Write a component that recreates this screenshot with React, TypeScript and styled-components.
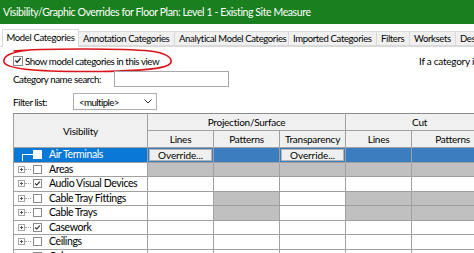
import React from "react";
import styled, { createGlobalStyle } from "styled-components";

const GlobalStyle = createGlobalStyle`
  html, body {
    margin: 0;
    padding: 0;
    background: #fff;
    overflow: hidden;
  }
  body {
    font-family: "Lato", "Liberation Sans", sans-serif;
    color: #000;
  }
`;

type Tone = "white" | "grey" | "blue";

type CategoryRow = {
  name: string;
  checked: boolean;
  selected?: boolean;
  cells: Tone[];
};

const tabs: { label: string; width: number; active?: boolean }[] = [
  { label: "Model Categories", width: 77, active: true },
  { label: "Annotation Categories", width: 97 },
  { label: "Analytical Model Categories", width: 115 },
  { label: "Imported Categories", width: 89 },
  { label: "Filters", width: 34 },
  { label: "Worksets", width: 47 },
  { label: "Design Options", width: 80 },
];

const W: Tone = "white";
const G: Tone = "grey";
const B: Tone = "blue";

const rows: CategoryRow[] = [
  { name: "Air Terminals", checked: false, selected: true, cells: [B, B, B, B, B] },
  { name: "Areas", checked: false, cells: [G, G, G, G, G] },
  { name: "Audio Visual Devices", checked: true, cells: [W, W, W, W, W] },
  { name: "Cable Tray Fittings", checked: false, cells: [W, G, W, G, G] },
  { name: "Cable Trays", checked: false, cells: [W, G, W, G, G] },
  { name: "Casework", checked: true, cells: [W, W, W, W, W] },
  { name: "Ceilings", checked: false, cells: [W, W, W, W, W] },
  { name: "Columns", checked: false, cells: [W, W, W, W, W] },
];

const Check = () => (
  <svg width="9" height="9" viewBox="0 0 9 9">
    <polyline points="1.5,4.5 3.5,6.5 7.5,2" fill="none" stroke="#222" strokeWidth="1.4" />
  </svg>
);

export default function App() {
  return (
    <>
      <GlobalStyle />
      <Window>
        <TitleBar>Visibility/Graphic Overrides for Floor Plan: Level 1 - Existing Site Measure</TitleBar>
        <TabStrip>
          {tabs.map((t) => (
            <TabItem key={t.label} $width={t.width} $active={!!t.active}>
              {t.label}
            </TabItem>
          ))}
        </TabStrip>
        <Panel>
          <CheckRow>
            <Box $size={10}>
              <Check />
            </Box>
            <CheckLabel>Show model categories in this view</CheckLabel>
            <Hint>If a category is unchecked, it will not be visible.</Hint>
            <Scribble viewBox="0 0 172 30" width="172" height="30">
              <path
                d="M11 6 C37 3.5 117 3 147 6 C162 8 169 12 168 17 C167 23 147 25.5 97 26.5 C47 27 3 25 1 17 C0 11 7 7 27 5"
                fill="none"
                stroke="#d9151c"
                strokeWidth="1.6"
                strokeLinecap="round"
              />
            </Scribble>
          </CheckRow>
          <FieldRow $top={5} $height={16}>
            <FieldLabel>Category name search:</FieldLabel>
            <TextInput $left={114} $width={115} />
          </FieldRow>
          <FieldRow $top={6} $height={17}>
            <FieldLabel>Filter list:</FieldLabel>
            <Select $left={73} $width={84}>
              <span>&lt;multiple&gt;</span>
              <svg width="8" height="5" viewBox="0 0 8 5">
                <polyline points="0.5,0.5 4,4 7.5,0.5" fill="none" stroke="#333" strokeWidth="1" />
              </svg>
            </Select>
          </FieldRow>
          <Grid>
            <colgroup>
              <col style={{ width: 134 }} />
              <col style={{ width: 66 }} />
              <col style={{ width: 66 }} />
              <col style={{ width: 66 }} />
              <col style={{ width: 66 }} />
              <col style={{ width: 82 }} />
            </colgroup>
            <thead>
              <tr>
                <HeadCell rowSpan={2}>Visibility</HeadCell>
                <HeadCell colSpan={3}>Projection/Surface</HeadCell>
                <HeadCell colSpan={2}>Cut</HeadCell>
              </tr>
              <tr>
                <HeadCell>Lines</HeadCell>
                <HeadCell>Patterns</HeadCell>
                <HeadCell>Transparency</HeadCell>
                <HeadCell>Lines</HeadCell>
                <HeadCell>Patterns</HeadCell>
              </tr>
            </thead>
            <tbody>
              {rows.map((r) => (
                <tr key={r.name}>
                  <NameCell $selected={!!r.selected}>
                    <Tree>
                      {r.selected ? (
                        <Elbow />
                      ) : (
                        <>
                          <Expander />
                          <Dots />
                        </>
                      )}
                      <Box $size={9} $bare={!!r.selected}>
                        {r.checked ? <Check /> : null}
                      </Box>
                      <Name>{r.name}</Name>
                    </Tree>
                  </NameCell>
                  {r.cells.map((tone, i) => (
                    <DataCell key={i} $tone={tone}>
                      {r.selected && (i === 0 || i === 2) ? <OverrideButton>Override...</OverrideButton> : null}
                    </DataCell>
                  ))}
                </tr>
              ))}
            </tbody>
          </Grid>
        </Panel>
      </Window>
    </>
  );
}

const Window = styled.div`
  width: 474px;
  height: 253px;
  overflow: hidden;
  display: flex;
  flex-direction: column;
  background: #fff;
  font-size: 9.75px;
  letter-spacing: -0.45px;
`;

const TitleBar = styled.div`
  height: 24px;
  flex: none;
  background: #1a801f;
  color: #fff;
  font-size: 10.5px;
  letter-spacing: -0.4px;
  line-height: 24px;
  padding-left: 3px;
  white-space: nowrap;
`;

const TabStrip = styled.div`
  display: flex;
  align-items: flex-end;
  height: 23px;
  flex: none;
  padding-left: 2px;
  border-bottom: 1px solid #d9d9d9;
  box-sizing: border-box;
`;

const TabItem = styled.div<{ $width: number; $active: boolean }>`
  flex: none;
  width: ${(p) => p.$width}px;
  height: ${(p) => (p.$active ? 18 : 15)}px;
  margin-bottom: ${(p) => (p.$active ? -1 : 0)}px;
  box-sizing: border-box;
  border: 1px solid #d9d9d9;
  border-bottom: ${(p) => (p.$active ? "none" : "1px solid #d9d9d9")};
  margin-left: -1px;
  background: ${(p) => (p.$active ? "#fff" : "#f0f0f0")};
  display: flex;
  align-items: center;
  justify-content: ${(p) => (p.$active ? "center" : "flex-start")};
  padding: ${(p) => (p.$active ? "0 0 2px" : "0 0 0 4px")};
  font-size: 9.5px;
  letter-spacing: -0.35px;
  white-space: nowrap;
  overflow: hidden;
  position: relative;
  z-index: ${(p) => (p.$active ? 1 : 0)};
  &:first-child {
    margin-left: 0;
  }
`;

const Panel = styled.div`
  display: flex;
  flex-direction: column;
  padding: 8px 0 0 13px;
  flex: 1;
`;

const CheckRow = styled.div`
  display: flex;
  align-items: center;
  height: 11px;
  position: relative;
`;

const Box = styled.span<{ $size: number; $bare?: boolean }>`
  flex: none;
  width: ${(p) => p.$size}px;
  height: ${(p) => p.$size}px;
  box-sizing: border-box;
  border: 1px solid ${(p) => (p.$bare ? "#fff" : "#8a8a8a")};
  background: #fff;
  display: flex;
  align-items: center;
  justify-content: center;
  svg {
    display: block;
  }
`;

const CheckLabel = styled.span`
  margin-left: 2px;
  white-space: nowrap;
`;

const Hint = styled.span`
  margin-left: auto;
  width: 55px;
  white-space: nowrap;
  flex: none;
  font-size: 10px;
  letter-spacing: -0.25px;
`;

const Scribble = styled.svg`
  position: absolute;
  left: -10px;
  top: -10px;
  pointer-events: none;
`;

const FieldRow = styled.div<{ $top: number; $height: number }>`
  display: flex;
  align-items: center;
  margin-top: ${(p) => p.$top}px;
  height: ${(p) => p.$height}px;
  position: relative;
`;

const FieldLabel = styled.span`
  white-space: nowrap;
  width: 0;
  overflow: visible;
`;

const TextInput = styled.div<{ $left: number; $width: number }>`
  margin-left: ${(p) => p.$left - 13}px;
  width: ${(p) => p.$width}px;
  height: 100%;
  box-sizing: border-box;
  border: 1px solid #a8a8a8;
  background: #fff;
`;

const Select = styled(TextInput)`
  display: flex;
  align-items: center;
  justify-content: space-between;
  padding: 0 4px 0 5px;
  border-color: #adadad;
  letter-spacing: -0.6px;
`;

const Grid = styled.table`
  margin-top: 3px;
  border-collapse: collapse;
  table-layout: fixed;
  width: 480px;
`;

const HeadCell = styled.th`
  font-weight: normal;
  font-size: 10px;
  letter-spacing: -0.25px;
  background: #f0f0f0;
  border: 1px solid #a0a0a0;
  border-top-color: #8c8c8c;
  padding: 0;
  height: 16px;
  text-align: center;
  white-space: nowrap;
`;

const NameCell = styled.td<{ $selected: boolean }>`
  padding: 0;
  border: 1px solid #a0a0a0;
  background: ${(p) => (p.$selected ? "#0a78d6" : "#fff")};
  color: ${(p) => (p.$selected ? "#fff" : "#000")};
  height: 13.5px;
`;

const Tree = styled.div`
  display: flex;
  align-items: center;
  height: 13px;
  padding-left: 4px;
`;

const Elbow = styled.span`
  flex: none;
  align-self: flex-end;
  width: 11px;
  height: 7px;
  margin-left: 4px;
  box-sizing: border-box;
  border-top: 1px solid #fff;
  border-left: 1px solid #fff;
`;

const Expander = styled.span`
  flex: none;
  width: 7px;
  height: 7px;
  box-sizing: border-box;
  border: 1px solid #a5a5a5;
  position: relative;
  &::before,
  &::after {
    content: "";
    position: absolute;
    background: #555;
  }
  &::before {
    left: 1px;
    top: 2px;
    width: 3px;
    height: 1px;
  }
  &::after {
    left: 2px;
    top: 1px;
    width: 1px;
    height: 3px;
  }
`;

const Dots = styled.span`
  flex: none;
  width: 6px;
  margin-right: 2px;
  border-top: 1px dotted #a0a0a0;
`;

const Name = styled.span`
  margin-left: 7px;
  white-space: nowrap;
  font-size: 10.5px;
  line-height: 13px;
  letter-spacing: -0.4px;
`;

const toneColor: Record<Tone, string> = {
  white: "#fff",
  grey: "#c0c0c0",
  blue: "#3c7dbf",
};

const DataCell = styled.td<{ $tone: Tone }>`
  padding: 0;
  border: 1px solid #a0a0a0;
  height: 13.5px;
  background: ${(p) => toneColor[p.$tone]};
`;

const OverrideButton = styled.div`
  margin: 0 1px;
  height: 12px;
  line-height: 11px;
  box-sizing: border-box;
  background: #efefef;
  border: 1px solid #b5b5b5;
  text-align: center;
  font-size: 10px;
  letter-spacing: -0.1px;
  color: #000;
`;
